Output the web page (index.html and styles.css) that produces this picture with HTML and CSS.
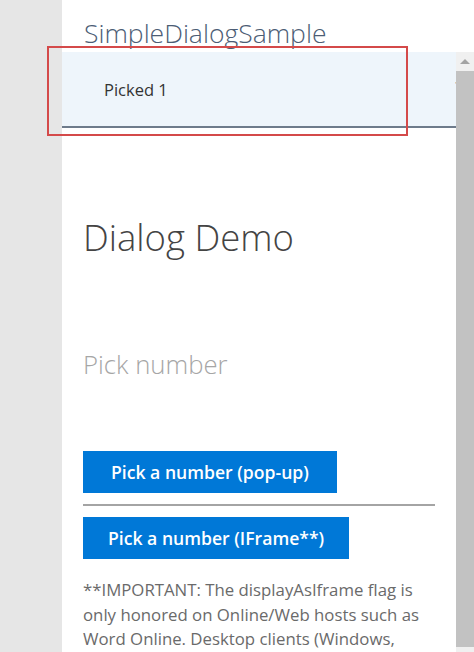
FILE: index.html
```html
<!DOCTYPE html>
<html>
<head>
<meta charset="utf-8">
<link rel="stylesheet" href="styles.css">
</head>
<body>
<div class="app">
  <div class="gutter"></div>
  <div class="main">
    <div class="title">SimpleDialogSample</div>
    <div class="band">
      <div class="picked">Picked 1</div>
      <div class="peek">1</div>
    </div>
    <div class="content">
      <h1 class="demo">Dialog Demo</h1>
      <h2 class="pick">Pick number</h2>
      <button class="btn btn-first">Pick a number (pop-up)</button>
      <hr class="rule">
      <button class="btn">Pick a number (IFrame**)</button>
      <p class="note">**IMPORTANT: The displayAsIframe flag is only honored on Online/Web hosts such as Word Online. Desktop clients (Windows, Mac) will always display as a pop-up.</p>
    </div>
  </div>
  <div class="scroll">
    <div class="arrow"></div>
    <div class="thumb"></div>
  </div>
  <div class="highlight"></div>
</div>
</body>
</html>
```
FILE: styles.css
```css
html, body {
  margin: 0;
  padding: 0;
  height: 100%;
  overflow: hidden;
  background: #ffffff;
  font-family: "Open Sans", "Noto Sans", sans-serif;
}
.app {
  position: relative;
  display: flex;
  height: 652px;
}
.gutter {
  width: 62px;
  flex: none;
  background: #e6e6e6;
}
.main {
  flex: 1;
  min-width: 0;
  display: flex;
  flex-direction: column;
  overflow: hidden;
}
.main > * {
  flex: none;
}
.title {
  height: 52px;
  box-sizing: border-box;
  padding: 16px 0 0 22px;
  font-size: 26.5px;
  font-weight: 300;
  color: #4c5d75;
  line-height: 34px;
  white-space: nowrap;
}
.band {
  height: 74px;
  background: #eef5fb;
  border-bottom: 2px solid #6e7b8b;
  display: flex;
  align-items: center;
  padding-left: 42px;
}
.picked {
  font-size: 16.5px;
  color: #333333;
}
.peek {
  margin-left: auto;
  margin-right: -5px;
  font-size: 12px;
  line-height: 12px;
  color: #555555;
  margin-top: -6px;
}
.content {
  padding: 0 21px;
}
.demo {
  margin: 87px 0 0 0;
  font-size: 36.5px;
  font-weight: 300;
  color: #444444;
  line-height: 44px;
  white-space: nowrap;
}
.pick {
  margin: 89px 0 0 0;
  font-size: 25.7px;
  font-weight: 300;
  color: #a6a6a6;
  line-height: 34px;
  white-space: nowrap;
}
.btn {
  display: block;
  border: none;
  background: #0078d7;
  color: #ffffff;
  font-family: "Open Sans", "Noto Sans", sans-serif;
  font-weight: 600;
  font-size: 17.6px;
  height: 42px;
  padding: 0 28px;
  margin: 0;
}
.btn-first {
  margin-top: 69px;
}
.btn-first + .rule + .btn {
  padding: 0 25px;
}
.rule {
  border: none;
  border-top: 2px solid #a4a4a4;
  margin: 11px 0;
}
.note {
  margin: 19px 4px 0 0;
  font-size: 16.8px;
  line-height: 24.5px;
  color: #6a6a6a;
  font-weight: 400;
}
.scroll {
  width: 18px;
  flex: none;
  margin-top: 52px;
  display: flex;
  flex-direction: column;
  background: #f0f0f0;
}
.arrow {
  height: 19px;
  flex: none;
  display: flex;
  justify-content: center;
  align-items: center;
}
.arrow::before {
  content: "";
  width: 0;
  height: 0;
  border-left: 5px solid transparent;
  border-right: 5px solid transparent;
  border-bottom: 5px solid #a3a3a3;
}
.thumb {
  flex: 1;
  margin-bottom: 5px;
  background: #c2c2c2;
}
.highlight {
  position: absolute;
  left: 47px;
  top: 46px;
  width: 357px;
  height: 86px;
  border: 2px solid #d44a4a;
  pointer-events: none;
}
```
